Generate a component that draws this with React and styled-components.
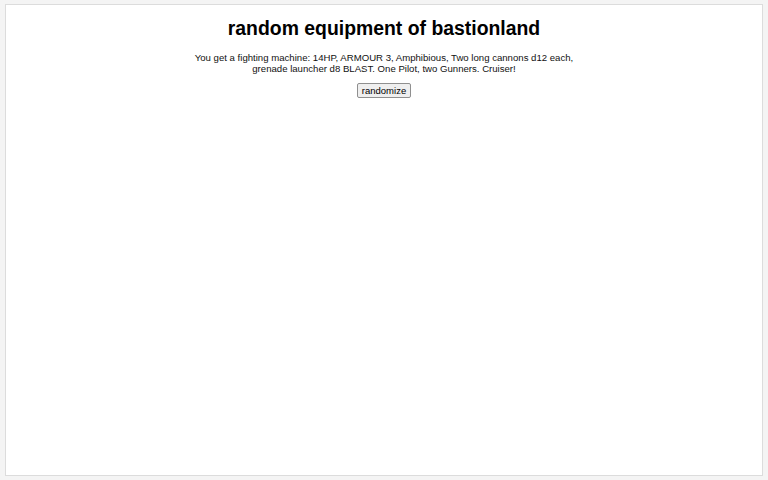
import React, { useState } from "react";
import styled, { createGlobalStyle } from "styled-components";

const Global = createGlobalStyle`
  html, body { margin: 0; padding: 0; background: #f4f4f4; }
  body { font-family: "Liberation Sans", Arial, sans-serif; color: #000; }
`;

const Page = styled.div`
  padding: 4px 5px 4px 5px;
  box-sizing: border-box;
  height: 480px;
`;

const Panel = styled.main`
  box-sizing: border-box;
  height: 100%;
  background: #fff;
  border: 1px solid #dcdcdc;
  display: flex;
  flex-direction: column;
  align-items: center;
  padding-top: 12px;
`;

const Title = styled.h1`
  margin: 0;
  font-size: 19.4px;
  font-weight: bold;
  line-height: 23px;
`;

const Result = styled.p`
  margin: 12px 0 0;
  font-size: 9.6px;
  line-height: 11px;
  text-align: center;
  width: 400px;
  color: #111;
`;

const Button = styled.button`
  margin-top: 9px;
  font-family: "Liberation Sans", Arial, sans-serif;
  font-size: 9.5px;
  padding: 1px 4px;
  background: #efefef;
  border: 1px solid #8f8f8f;
  border-radius: 2px;
  color: #000;
`;

const results = [
  "You get a fighting machine: 14HP, ARMOUR 3, Amphibious, Two long cannons d12 each, grenade launcher d8 BLAST. One Pilot, two Gunners. Cruiser!",
];

export default function App() {
  const [text, setText] = useState(results[0]);
  return (
    <>
      <Global />
      <Page>
        <Panel>
          <Title>random equipment of bastionland</Title>
          <Result>{text}</Result>
          <Button onClick={() => setText(results[0])}>randomize</Button>
        </Panel>
      </Page>
    </>
  );
}
